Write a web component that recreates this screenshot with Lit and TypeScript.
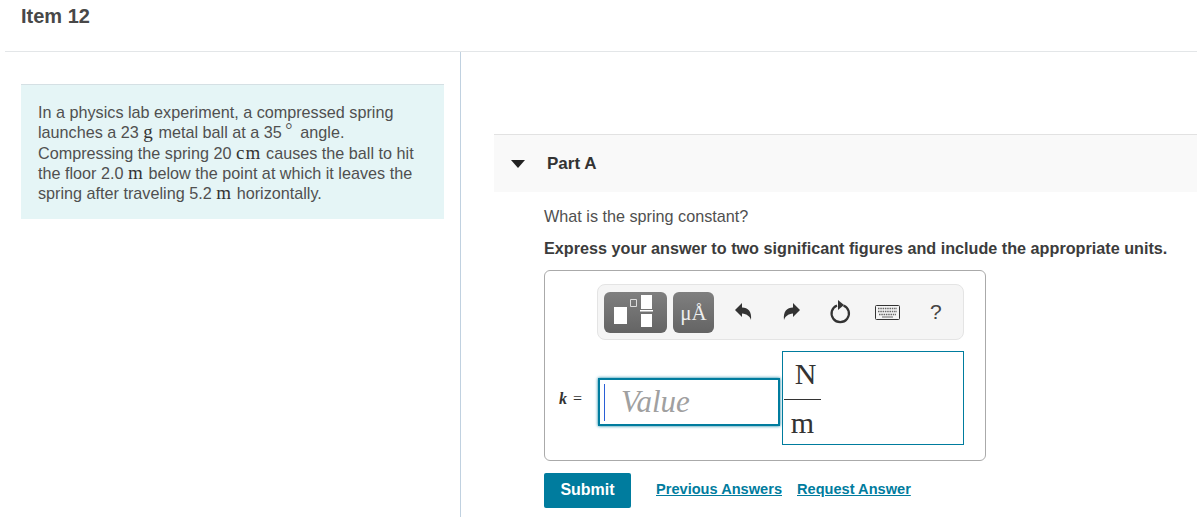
import { LitElement, html, css } from 'lit';
import { customElement } from 'lit/decorators.js';

@customElement('app-root')
export class AppRoot extends LitElement {
  static styles = css`
    :host {
      display: block;
      height: 517px;
      overflow: hidden;
      background: #fff;
      font-family: "Liberation Sans", Arial, sans-serif;
      font-size: 16.2px;
      color: #444;
    }
    .title {
      height: 46px;
      margin-left: 5px;
      padding: 5px 0 0 16px;
      border-bottom: 1px solid #e3e6e8;
      font-size: 20px;
      line-height: 23px;
      font-weight: bold;
      color: #484848;
    }
    .columns {
      display: flex;
      height: 465px;
    }
    .left {
      box-sizing: border-box;
      border-right: 1px solid #c0d1e0;
      width: 461px;
      padding: 32px 16px 0 21px;
    }
    .intro {
      width: 423px;
      height: 135px;
      box-sizing: border-box;
      padding: 17px 17px 0;
      background: #e5f5f6;
      border-top: 1px solid #d5e0e4;
      line-height: 20.25px;
      color: #505050;
    }
    .math {
      font-family: "Liberation Serif", serif;
      font-size: 19px;
      letter-spacing: 1.2px;
      line-height: 0;
      color: #333;
    }
    .deg {
      display: inline-block;
      width: 14px;
      line-height: 0;
      position: relative;
      top: -2px;
      text-align: center;
      font-family: "Liberation Serif", serif;
      font-size: 18px;
    }
    .right { flex: 1; padding: 82px 0 0 33px; }
    .part {
      display: flex;
      align-items: center;
      height: 57px;
      background: #f9f9f9;
      border-top: 1px solid #e2e2e2;
      font-size: 17px;
      font-weight: bold;
      color: #333;
    }
    .caret { width: 14px; height: 8px; margin: 0 22px 0 17px; }
    .body { padding: 15px 0 0 50px; }
    .q { line-height: 19px; color: #505050; }
    .hint { margin-top: 13px; line-height: 19px; font-weight: bold; color: #3c3c3c; }
    .answer {
      width: 442px;
      height: 191px;
      box-sizing: border-box;
      margin-top: 12px;
      padding: 13px 21px 0 52px;
      border: 1px solid #aaa;
      border-radius: 6px;
    }
    .toolbar {
      display: flex;
      align-items: center;
      height: 56px;
      box-sizing: border-box;
      padding-left: 6px;
      background: #f5f5f5;
      border: 1px solid #e4e4e4;
      border-radius: 8px;
    }
    .tbtn {
      height: 41px;
      border-radius: 6px;
      background: linear-gradient(#7f7f7f, #646464);
      display: flex;
      align-items: center;
      justify-content: center;
      color: #fff;
    }
    .tbtn.tpl { width: 63px; }
    .tbtn.unit {
      width: 41px;
      margin-left: 6px;
      font-family: "Liberation Serif", serif;
      font-size: 21px;
      color: #eee;
      padding-top: 3px;
      box-sizing: border-box;
    }
    .tool { display: flex; }
    .help { font-size: 21px; color: #444; margin-left: 30px; }
    .equation { display: flex; align-items: center; margin-top: 11px; margin-left: -39px; }
    .label {
      flex: none;
      width: 40px;
      padding: 2px 0 0 1px;
      box-sizing: border-box;
      font-family: "Liberation Serif", serif;
      font-size: 16px;
      word-spacing: 2px;
      color: #333;
    }
    .label i { font-weight: bold; }
    .value {
      flex: none;
      width: 182px;
      height: 48px;
      box-sizing: border-box;
      border: 2px solid #007c9e;
      box-shadow: 0 0 3px #007c9e;
      display: flex;
      align-items: center;
      font-family: "Liberation Serif", serif;
      font-style: italic;
      font-size: 31px;
      color: #a0a0a0;
      position: relative;
      top: 4px;
    }
    .cursor { width: 1px; height: 37px; margin: 0 16px 0 4px; background: #2a5fd6; }
    .units {
      flex: none;
      width: 182px;
      height: 94px;
      margin-left: 2px;
      box-sizing: border-box;
      padding: 1px 0 0 1px;
      border: 1px solid #007c9e;
      font-family: "Liberation Serif", serif;
      font-size: 30px;
      color: #333;
    }
    .frac { width: 37px; display: flex; flex-direction: column; align-items: center; }
    .num {
      height: 47px;
      line-height: 41px;
      width: 100%;
      padding-left: 6px;
      text-align: center;
      border-bottom: 1px solid #333;
      box-sizing: border-box;
    }
    .den { line-height: 46px; }
    .actions { display: flex; align-items: center; margin-top: 12px; }
    .submit {
      width: 87px;
      height: 35px;
      padding: 0 0 2px;
      border: 0;
      border-radius: 2px;
      background: #007c9e;
      color: #fff;
      font: bold 16px "Liberation Sans", Arial, sans-serif;
    }
    .link {
      font-size: 14.6px;
      font-weight: bold;
      color: #007c9e;
      text-decoration: underline;
      position: relative;
      top: -2px;
    }
    .link.first { margin-left: 25px; }
    .link.second { margin-left: 15px; }
  `;

  render() {
    return html`
      <div class="title">Item 12</div>
      <div class="columns">
        <div class="left">
          <div class="intro">
            In a physics lab experiment, a compressed spring<br />
            launches a 23 <span class="math">g</span> metal ball at a 35<span class="deg">°</span> angle.<br />
            Compressing the spring 20 <span class="math">cm</span> causes the ball to hit<br />
            the floor 2.0 <span class="math">m</span> below the point at which it leaves the<br />
            spring after traveling 5.2 <span class="math">m</span> horizontally.
          </div>
        </div>
        <div class="right">
          <div class="part">
            <svg class="caret" viewBox="0 0 14 8"><path d="M0 0h14L7 8z" fill="#222" /></svg>
            Part A
          </div>
          <div class="body">
            <div class="q">What is the spring constant?</div>
            <div class="hint">Express your answer to two significant figures and include the appropriate units.</div>
            <div class="answer">
              <div class="toolbar">
                <div class="tbtn tpl">
                  <svg width="63" height="41" viewBox="0 0 63 41">
                    <path d="M10 15h13v17H10z" fill="#fff" />
                    <path d="M26.500 7.500h6v7h-6z" fill="none" stroke="#ddd" />
                    <path d="M37 3h11v14H37zM36 18h13v1.500H36zM37 22h11v13H37z" fill="#fff" />
                  </svg>
                </div>
                <div class="tbtn unit">μÅ</div>
                <svg class="tool" style="margin-left:21px" width="18" height="18" viewBox="0 0 18 18">
                  <path d="M0 7 7 0v4.500c6 0 10 4 9 12.500-1-3.500-4-6-9-6.500V14z" fill="#333" />
                </svg>
                <svg class="tool" style="margin-left:29px" width="18" height="18" viewBox="0 0 18 18">
                  <path d="M18 7 11 0v4.500C5 4.500 1 8.500 2 17c1-3.500 4-6 9-6.500V14z" fill="#333" />
                </svg>
                <svg class="tool" style="margin-left:29px" width="22" height="24" viewBox="0 0 22 24">
                  <path d="M8 5.400a8.700 8.700 0 1 0 6.500 0" fill="none" stroke="#333" stroke-width="2.200" />
                  <path d="M9 0l6 5-6 5z" fill="#333" />
                </svg>
                <svg class="tool" style="margin-left:24px" width="25" height="15" viewBox="0 0 25 15">
                  <rect x=".5" y=".5" width="24" height="14" rx="1" fill="#f4f4f4" stroke="#333" />
                  <path d="M3 3.500h19M3 6.500h19M4 9.500h17" stroke="#666" stroke-width="1.500" stroke-dasharray="1.500 .8" />
                  <path d="M7 12h11" stroke="#666" />
                </svg>
                <span class="help">?</span>
              </div>
              <div class="equation">
                <div class="label"><i>k</i> =</div>
                <div class="value"><span class="cursor"></span>Value</div>
                <div class="units">
                  <div class="frac">
                    <div class="num">N</div>
                    <div class="den">m</div>
                  </div>
                </div>
              </div>
            </div>
            <div class="actions">
              <button class="submit">Submit</button>
              <a class="link first">Previous Answers</a>
              <a class="link second">Request Answer</a>
            </div>
          </div>
        </div>
      </div>
    `;
  }
}
